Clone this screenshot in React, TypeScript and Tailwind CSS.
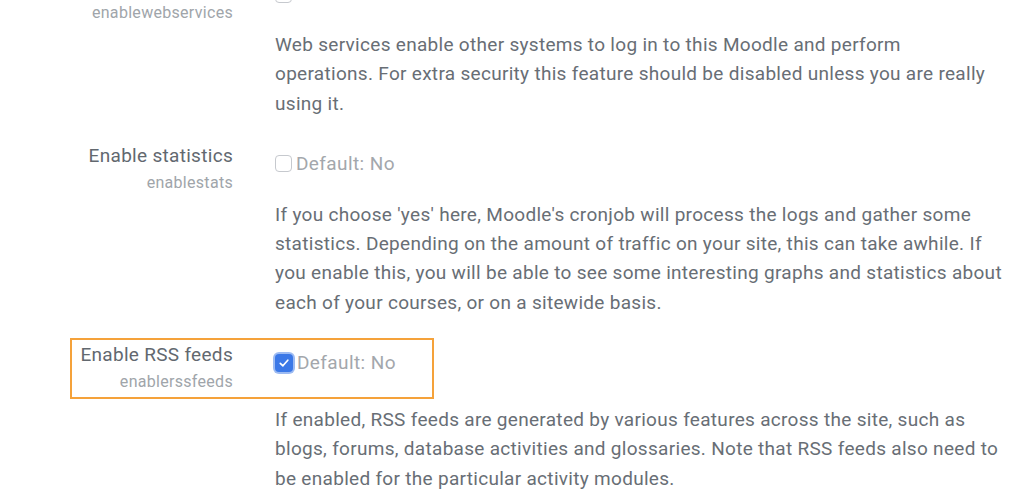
import React from "react";

function Unchecked() {
  return (
    <span className="inline-block w-[17px] h-[17px] rounded-[4px] border border-[#c6c9ce] bg-white shrink-0" />
  );
}

function Checked() {
  return (
    <span className="inline-flex items-center justify-center w-[18px] h-[18px] rounded-[4px] bg-[#3b78e7] ring-2 ring-[#9dbbf2] shrink-0">
      <svg width="12" height="12" viewBox="0 0 12 12" fill="none">
        <path d="M2.3 6.3 L4.9 8.8 L9.8 3.2" stroke="white" strokeWidth="1.7" strokeLinecap="round" strokeLinejoin="round" />
      </svg>
    </span>
  );
}

type RowProps = {
  name: string;
  keyName: string;
  checked?: boolean;
  desc: string;
  descMt: string;
  highlight?: boolean;
};

function Row({ name, keyName, checked, desc, descMt, highlight }: RowProps) {
  return (
    <div className="relative flex gap-[42px]">
      {highlight && (
        <div className="absolute left-[70px] top-[-4px] w-[364px] h-[61px] border-[2.5px] border-[#f5a23a] pointer-events-none" />
      )}
      <div className="w-[233px] shrink-0 text-right">
        <div className="text-[19px] tracking-[0.3px] leading-[26px] text-[#62686f]">{name}</div>
        <div className="text-[16px] tracking-[0.3px] leading-[28px] text-[#a0a5aa]">{keyName}</div>
      </div>
      <div className="w-[727px]">
        <div className="mt-[8px] flex items-center gap-[4px] h-[26px]">
          {checked ? <Checked /> : <Unchecked />}
          <span className="text-[19px] tracking-[0.4px] leading-[26px] text-[#a3a7ac]">Default: No</span>
        </div>
        <p className={"text-[19px] tracking-[0.3px] leading-[29.3px] text-[#686e75] " + descMt}>{desc}</p>
      </div>
    </div>
  );
}

export default function App() {
  return (
    <div
      className="w-[1024px] h-[502px] overflow-hidden bg-white"
      style={{ fontFamily: "Roboto, 'Noto Sans', sans-serif" }}
    >
      <div className="mt-[-27px] flex flex-col gap-[25px]">
        <Row
          name="Enable web services"
          keyName="enablewebservices"
          desc="Web services enable other systems to log in to this Moodle and perform operations. For extra security this feature should be disabled unless you are really using it."
          descMt="mt-[23px]"
        />
        <Row
          name="Enable statistics"
          keyName="enablestats"
          desc="If you choose 'yes' here, Moodle's cronjob will process the logs and gather some statistics. Depending on the amount of traffic on your site, this can take awhile. If you enable this, you will be able to see some interesting graphs and statistics about each of your courses, or on a sitewide basis."
          descMt="mt-[23px]"
        />
        <Row
          name="Enable RSS feeds"
          keyName="enablerssfeeds"
          checked
          desc="If enabled, RSS feeds are generated by various features across the site, such as blogs, forums, database activities and glossaries. Note that RSS feeds also need to be enabled for the particular activity modules."
          descMt="mt-[29px]"
          highlight
        />
      </div>
    </div>
  );
}
